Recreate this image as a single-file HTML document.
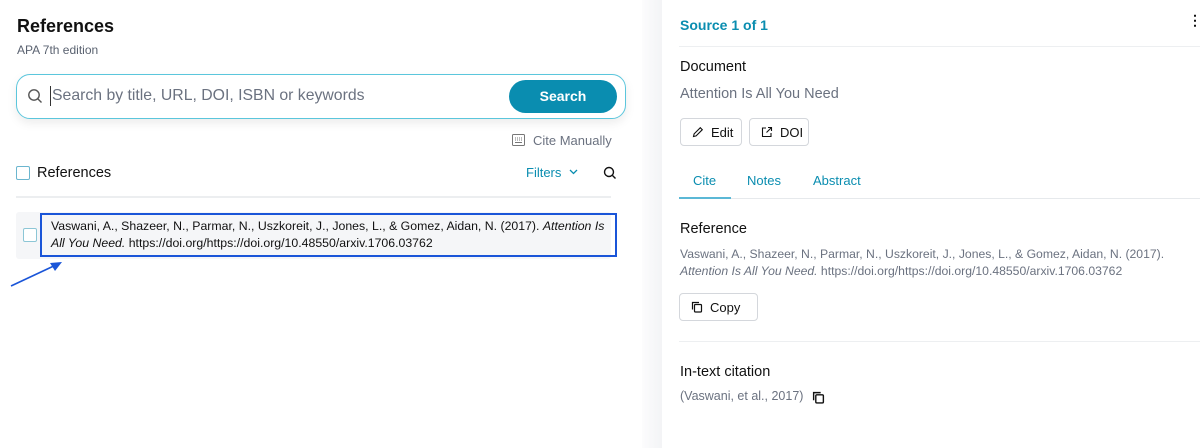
<!DOCTYPE html>
<html><head><meta charset="utf-8"><style>
*{margin:0;padding:0;box-sizing:border-box}
body{width:1200px;height:448px;overflow:hidden;background:#fff;font-family:"Liberation Sans",sans-serif;position:relative;color:#111}
.a{position:absolute;white-space:nowrap}
.teal{color:#0a8db0}
.btn{position:absolute;border:1px solid #d4d7dc;border-radius:4px;background:#fff;font-size:13px;display:flex;align-items:center;gap:7px;padding-left:11px;color:#111}
</style></head><body>
<div class="a" style="left:17px;top:16px;font-size:18px;font-weight:bold">References</div>
<div class="a" style="left:17px;top:43px;font-size:12px;color:#5a6270">APA 7th edition</div>
<div class="a" style="left:16px;top:74px;width:610px;height:45px;border:1.5px solid #5bc6dc;border-radius:14px;box-shadow:0 4px 10px rgba(0,0,0,0.08)"></div>
<svg class="a" style="left:27px;top:88px" width="16" height="16" viewBox="0 0 16 16"><circle cx="7" cy="7" r="5.2" fill="none" stroke="#555" stroke-width="1.4"/><path d="M11 11l3.5 3.5" stroke="#555" stroke-width="1.4"/></svg>
<div class="a" style="left:50px;top:86px;width:1px;height:20px;background:#333"></div>
<div class="a" style="left:52px;top:87px;font-size:15.8px;color:#6b7280">Search by title, URL, DOI, ISBN or keywords</div>
<div class="a" style="left:509px;top:80px;width:108px;height:33px;border-radius:17px;background:#0a8db0;color:#fff;font-size:14px;font-weight:bold;text-align:center;line-height:33px">Search</div>
<svg class="a" style="left:512px;top:134px" width="13" height="12" viewBox="0 0 13 12"><rect x="0.5" y="0.5" width="12" height="11" rx="1" fill="none" stroke="#777"/><path d="M3 4h1M5 4h1M7 4h1M9 4h1M3 6h1M5 6h1M7 6h1M9 6h1M3 8.5h7" stroke="#777"/></svg>
<div class="a" style="left:533px;top:133px;font-size:13px;color:#6b7280">Cite Manually</div>
<div class="a" style="left:16px;top:166px;width:14px;height:14px;border:1.5px solid #6bb6cf;border-radius:2px"></div>
<div class="a" style="left:37px;top:165px;font-size:14.5px;color:#111">References</div>
<div class="a teal" style="left:526px;top:165px;font-size:13px">Filters</div>
<svg class="a" style="left:569px;top:169px" width="9" height="6" viewBox="0 0 9 6"><path d="M1 1l3.5 3.5L8 1" fill="none" stroke="#0a8db0" stroke-width="1.3"/></svg>
<svg class="a" style="left:603px;top:166px" width="14" height="14" viewBox="0 0 14 14"><circle cx="6" cy="6" r="4.5" fill="none" stroke="#111" stroke-width="1.4"/><path d="M9.5 9.5l3 3" stroke="#111" stroke-width="1.4"/></svg>
<div class="a" style="left:16px;top:196px;width:595px;height:2px;background:#eceef0"></div>
<div class="a" style="left:16px;top:212px;width:595px;height:47px;background:#f5f6f8;border-radius:3px"></div>
<div class="a" style="left:23px;top:228px;width:14px;height:14px;border:1.5px solid #8cc6d6;border-radius:2px;background:#fff"></div>
<div class="a" style="left:40px;top:213px;width:577px;height:44px;border:2px solid #1a55d8"></div>
<div class="a" style="left:51px;top:218px;font-size:12.3px;line-height:17px;color:#111;white-space:normal;width:560px">Vaswani, A., Shazeer, N., Parmar, N., Uszkoreit, J., Jones, L., &amp; Gomez, Aidan, N. (2017). <i>Attention Is All You Need.</i> https://doi.org/https://doi.org/10.48550/arxiv.1706.03762</div>
<svg class="a" style="left:0;top:255px" width="80" height="40"><path d="M11 31L58 9" stroke="#1a55d8" stroke-width="1.6"/><path d="M62 7L50 8L55 16Z" fill="#1a55d8"/></svg>
<div class="a" style="left:642px;top:0;width:20px;height:448px;background:linear-gradient(90deg,#fcfcfd,#f3f4f6)"></div>
<div class="a teal" style="left:680px;top:17px;font-size:14px;font-weight:bold">Source 1 of 1</div>
<div class="a" style="left:1188px;top:17px;font-size:14px;font-weight:bold;line-height:6px">⋮</div>
<div class="a" style="left:679px;top:46px;width:521px;height:1px;background:#edeff1"></div>
<div class="a" style="left:680px;top:59px;font-size:14.5px">Document</div>
<div class="a" style="left:680px;top:86px;font-size:14.5px;color:#6b7280">Attention Is All You Need</div>
<div class="btn" style="left:680px;top:118px;width:62px;height:28px"><svg width="12" height="12" viewBox="0 0 12 12"><path d="M1.5 10.5l.6-2.6L8.3 1.7l2 2L4.1 9.9z" fill="none" stroke="#111" stroke-width="1.1"/></svg>Edit</div>
<div class="btn" style="left:749px;top:118px;width:60px;height:28px"><svg width="12" height="12" viewBox="0 0 12 12"><path d="M5 2H1.5v8.5H10V7M7 1.5h3.5V5M10.5 1.5L5.5 6.5" fill="none" stroke="#111" stroke-width="1.1"/></svg>DOI</div>
<div class="a teal" style="left:693px;top:173px;font-size:13px">Cite</div>
<div class="a teal" style="left:747px;top:173px;font-size:13px">Notes</div>
<div class="a teal" style="left:813px;top:173px;font-size:13px">Abstract</div>
<div class="a" style="left:679px;top:198px;width:521px;height:1px;background:#e6e9ec"></div>
<div class="a" style="left:679px;top:197px;width:52px;height:2px;background:#5bb8d6"></div>
<div class="a" style="left:680px;top:221px;font-size:14.5px">Reference</div>
<div class="a" style="left:680px;top:246px;font-size:12.2px;line-height:17px;color:#6b7280">Vaswani, A., Shazeer, N., Parmar, N., Uszkoreit, J., Jones, L., &amp; Gomez, Aidan, N. (2017).<br><i>Attention Is All You Need.</i> https://doi.org/https://doi.org/10.48550/arxiv.1706.03762</div>
<div class="btn" style="left:679px;top:293px;width:79px;height:28px"><svg width="12" height="12" viewBox="0 0 12 12"><rect x="3.5" y="3.5" width="7" height="7.5" rx="1" fill="none" stroke="#111" stroke-width="1.2"/><path d="M1.5 8.5V1.5h6.5" fill="none" stroke="#111" stroke-width="1.2"/></svg>Copy</div>
<div class="a" style="left:679px;top:341px;width:521px;height:1px;background:#edeff1"></div>
<div class="a" style="left:680px;top:364px;font-size:14.5px">In-text citation</div>
<div class="a" style="left:680px;top:389px;font-size:12.5px;color:#6b7280">(Vaswani, et al., 2017)</div>
<svg class="a" style="left:812px;top:391px" width="13" height="13" viewBox="0 0 12 12"><rect x="3.5" y="3.5" width="7" height="7.5" rx="1" fill="none" stroke="#111" stroke-width="1.3"/><path d="M1.5 8.5V1.5h6.5" fill="none" stroke="#111" stroke-width="1.3"/></svg>
</body></html>
